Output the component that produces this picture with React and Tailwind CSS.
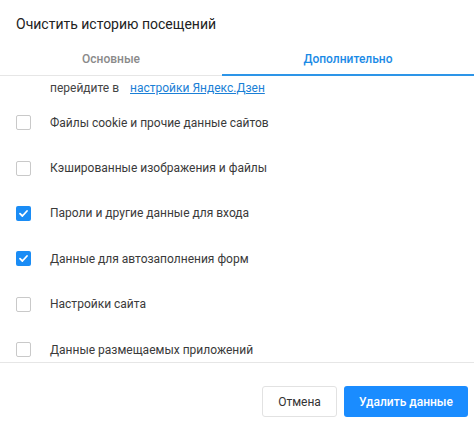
import React from "react";

const items = [
  { label: "Файлы cookie и прочие данные сайтов", checked: false },
  { label: "Кэшированные изображения и файлы", checked: false },
  { label: "Пароли и другие данные для входа", checked: true },
  { label: "Данные для автозаполнения форм", checked: true },
  { label: "Настройки сайта", checked: false },
  { label: "Данные размещаемых приложений", checked: false },
];

function Box({ checked }) {
  if (checked) {
    return (
      <div className="w-[15px] h-[15px] rounded-[2px] bg-[#1a8cf5] flex items-center justify-center shrink-0">
        <svg width="11" height="11" viewBox="0 0 11 11" fill="none">
          <path d="M2 5.6 L4.4 8 L9 3" stroke="white" strokeWidth="1.8" strokeLinecap="round" strokeLinejoin="round" />
        </svg>
      </div>
    );
  }
  return <div className="w-[15px] h-[15px] rounded-[2px] border border-[#c9c9c9] bg-white shrink-0" />;
}

export default function App() {
  return (
    <div
      className="w-[474px] h-[428px] bg-white flex flex-col overflow-hidden text-[#333]"
      style={{ fontFamily: 'Roboto, "Noto Sans", sans-serif' }}
    >
      <div className="h-[46px] pl-[16px] pt-[13px] text-[14px] leading-[22px] text-[#222]">
        Очистить историю посещений
      </div>
      <div className="h-[30px] flex border-b border-[#e6e6e6]">
        <div className="w-[222px] flex items-center justify-center text-[12px] font-medium text-[#8a8a8a] pb-[3px]">
          Основные
        </div>
        <div className="flex-1 flex items-center justify-center text-[12px] font-medium text-[#1a8ae6] border-b-2 border-[#2d95e8] mb-[-1px] pb-[2px]">
          Дополнительно
        </div>
      </div>
      <div className="flex-1 overflow-hidden">
        <div className="h-[24px] flex items-center pl-[50px] text-[12px] text-[#444]">
          <span>перейдите в</span>
          <span className="ml-[11px] text-[#1a7fd6] underline">настройки Яндекс.Дзен</span>
        </div>
        {items.map((it) => (
          <div key={it.label} className="h-[45.4px] flex items-center pl-[16px]">
            <Box checked={it.checked} />
            <span className="ml-[19px] text-[12px] text-[#3a3a3a]">{it.label}</span>
          </div>
        ))}
      </div>
      <div className="h-[66px] border-t border-[#e6e6e6] flex justify-end items-start pt-[23px] pr-[6px] gap-[7px]">
        <button className="h-[31px] w-[75px] rounded-[3px] border border-[#e2e2e2] bg-white text-[12px] text-[#333]">
          Отмена
        </button>
        <button className="h-[31px] w-[124px] rounded-[3px] bg-[#1a8cff] text-[12px] font-medium text-white">
          Удалить данные
        </button>
      </div>
    </div>
  );
}
